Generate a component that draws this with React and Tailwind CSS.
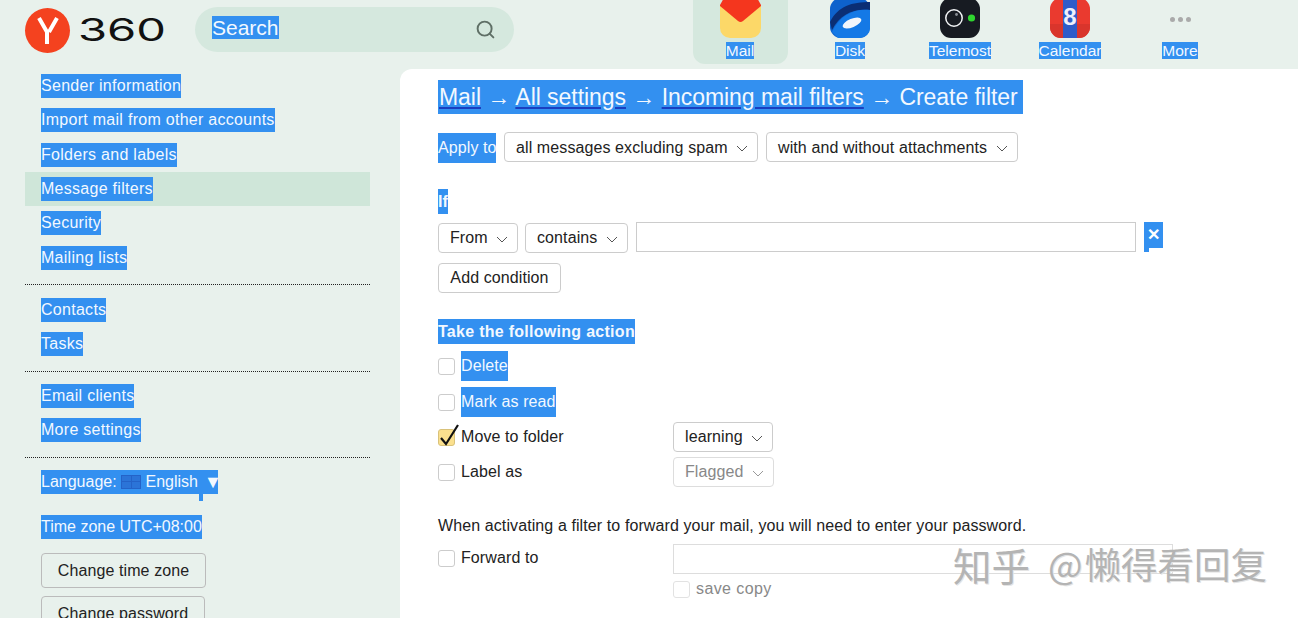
import { Search } from 'lucide-react'

const Sel = ({ children }) => <span className="bg-[#3390f0] text-[#f2f8ff]">{children}</span>

function Chevron({ color = '#555' }) {
  return (
    <svg width="12" height="7" viewBox="0 0 12 7" fill="none" className="ml-[8px] mt-[2px]">
      <path d="M1 1l5 5 5-5" stroke={color} strokeWidth="1" />
    </svg>
  )
}

function Dropdown({ children, className = '', disabled = false }) {
  return (
    <div className={`flex items-center justify-between bg-white border border-[#ccc] rounded-[4px] pl-[11px] pr-[9px] h-[30px] ${disabled ? 'text-[#888] border-[#ddd]' : 'text-[#222]'} ${className}`}>
      <span>{children}</span>
      <Chevron color={disabled ? '#999' : '#555'} />
    </div>
  )
}

function SideRow({ children, active = false }) {
  return (
    <div className={`h-[34.3px] flex items-center pl-4 ${active ? 'bg-[#cfe6d9]' : ''}`}>
      <Sel>{children}</Sel>
    </div>
  )
}

const Divider = ({ className }) => <div className={`h-px border-t border-dotted border-[#222] ${className}`} />

function Check({ checked = false, disabled = false }) {
  return (
    <div className={`relative w-[17px] h-[17px] shrink-0 rounded-[3px] border ${checked ? 'bg-[#fbe08e] border-[#d9c27a]' : 'bg-white border-[#ccc]'} ${disabled ? 'border-[#e2e2e2]' : ''}`}>
      {checked && (
        <svg width="22" height="24" viewBox="0 0 22 24" fill="none" className="absolute left-0 -top-[7px]">
          <path d="M2 15l5 6L19 2" stroke="#111" strokeWidth="2.2" />
        </svg>
      )}
    </div>
  )
}

function MailIcon() {
  return (
    <svg width="41" height="38" viewBox="0 0 41 38">
      <path d="M0 6h41v22a10 10 0 0 1-10 10H10A10 10 0 0 1 0 28z" fill="#fcd868" />
      <path d="M0 5 5 -4h31l5 9v1L23 21a4 4 0 0 1-5 0L0 6z" fill="#f4361e" />
    </svg>
  )
}

function DiskIcon() {
  return (
    <svg width="40" height="38" viewBox="0 0 40 38">
      <rect x="0" y="-2" width="40" height="40" rx="11" fill="#0e62cc" />
      <path d="M0 22C8 6 22 2 40 2v8C24 8 10 14 2 30z" fill="#0b2e74" />
      <path d="M2 32C10 14 26 8 40 10v18a10 10 0 0 1-10 10H8z" fill="#1479e6" />
      <ellipse cx="22" cy="23" rx="10" ry="4.2" transform="rotate(-22 22 23)" fill="#f2f6fb" />
    </svg>
  )
}

function TelemostIcon() {
  return (
    <svg width="40" height="38" viewBox="0 0 40 38">
      <rect x="0" y="-2" width="40" height="40" rx="11" fill="#171b22" />
      <circle cx="14" cy="18" r="8.2" fill="none" stroke="#f0f2f4" strokeWidth="1.5" />
      <circle cx="16.5" cy="14.5" r="1.4" fill="#8a8f96" />
      <circle cx="31.5" cy="18" r="3.6" fill="#2fd62f" />
    </svg>
  )
}

function CalendarIcon() {
  return (
    <svg width="40" height="38" viewBox="0 0 40 38">
      <rect x="0" y="-2" width="40" height="40" rx="11" fill="#ea3a2f" />
      <path d="M0 24h40v3a11 11 0 0 1-11 11H11A11 11 0 0 1 0 27z" fill="#d9352c" />
      <rect x="13" y="-2" width="14" height="40" fill="#2f5cc8" />
    </svg>
  )
}

const apps = [
  { name: 'Mail', icon: <MailIcon />, active: true },
  { name: 'Disk', icon: <DiskIcon /> },
  { name: 'Telemost', icon: <TelemostIcon /> },
  { name: 'Calendar', icon: <CalendarIcon />, badge: '8' },
  { name: 'More' },
]

function AppLink({ app }) {
  return (
    <div className="w-[110px] flex justify-center">
      <div className={`relative w-[95px] h-[64px] flex flex-col items-center rounded-b-[12px] ${app.active ? 'bg-[#d5e8de]' : ''}`}>
        <div className="h-[38px] flex items-center justify-center">
          {app.icon ?? (
            <div className="flex gap-[3px]">
              <div className="w-[5px] h-[5px] rounded-full bg-[#aaa]" />
              <div className="w-[5px] h-[5px] rounded-full bg-[#aaa]" />
              <div className="w-[5px] h-[5px] rounded-full bg-[#aaa]" />
            </div>
          )}
          {app.badge && <span className="absolute top-[3px] text-[24px] leading-[28px] font-bold text-[#eef0fb]">{app.badge}</span>}
        </div>
        <div className="mt-[3px] text-[15.5px] leading-[19px]"><Sel>{app.name}</Sel></div>
      </div>
    </div>
  )
}

export default function App() {
  return (
    <div className="relative w-[1298px] h-[618px] overflow-hidden bg-[#e8f1ec] text-[16px] text-[#222] font-['Liberation_Sans',sans-serif]">
      <header className="h-[69px] flex">
        <div className="w-[45px] h-[45px] mt-[8px] ml-[25px] rounded-full bg-[#f4421f] flex items-center justify-center">
          <svg width="24" height="30" viewBox="0 0 24 30" fill="none">
            <path d="M3 2l8 14v12M21 2l-8 14" stroke="#fff" strokeWidth="4" />
          </svg>
        </div>
        <div className="ml-[8px] mt-[8px] w-[92px] h-[45px] flex items-center font-['Inter',sans-serif] font-normal text-[31px] text-[#111]">
          <span className="inline-block origin-left scale-x-[1.52]">360</span>
        </div>
        <div className="ml-[25px] mt-[7px] w-[319px] h-[45px] rounded-full bg-[#d5e8de] flex items-center justify-between pl-[17px] pr-[18px]">
          <span className="mb-[4px] text-[21px] leading-[24px]"><Sel>Search</Sel></span>
          <Search size={21} strokeWidth={2.2} color="#5f6f66" />
        </div>
        <nav className="ml-[171px] flex">
          {apps.map(app => <AppLink key={app.name} app={app} />)}
        </nav>
      </header>

      <div className="flex h-[549px]">
        <aside className="w-[400px] shrink-0 pl-[25px] pr-[30px] tracking-[0.28px]">
          <SideRow>Sender information</SideRow>
          <SideRow>Import mail from other accounts</SideRow>
          <SideRow>Folders and labels</SideRow>
          <SideRow active>Message filters</SideRow>
          <SideRow>Security</SideRow>
          <SideRow>Mailing lists</SideRow>
          <Divider className="mt-[9px] mb-[8px]" />
          <SideRow>Contacts</SideRow>
          <SideRow>Tasks</SideRow>
          <Divider className="mt-[10px] mb-[6px]" />
          <SideRow>Email clients</SideRow>
          <SideRow>More settings</SideRow>
          <Divider className="mt-[10px] mb-[7px]" />
          <div className="relative h-[34px] flex items-center pl-4 tracking-normal">
            <span className="bg-[#3390f0] text-[#f2f8ff] h-[24px] leading-[24px] flex items-center w-[177px] whitespace-nowrap">
              Language:&nbsp;
              <span className="w-[20px] h-[14px] shrink-0 bg-[#2463c8] grid grid-cols-2 gap-px p-px">
                <span className="bg-[#2b74d8]" /><span className="bg-[#2b74d8]" /><span className="bg-[#2b74d8]" /><span className="bg-[#2b74d8]" />
              </span>
              &nbsp;English
              <span className="ml-[6px] text-[18px] leading-[24px]">▼</span>
            </span>
            <span className="absolute left-[174px] top-[29px] w-[4px] h-[7px] bg-[#3390f0]" />
          </div>
          <div className="mt-[11px] h-[34px] flex items-center pl-4 tracking-normal"><Sel>Time zone UTC+08:00</Sel></div>
          <div className="mt-[9px] ml-4 w-[165px] h-[35px] border border-[#bbb] rounded-[4px] flex items-center justify-center tracking-[0.1px] pt-px">Change time zone</div>
          <div className="mt-[8px] ml-4 w-[164px] h-[35px] border border-[#bbb] rounded-[4px] flex items-center justify-center tracking-[0.1px] pt-px">Change password</div>
        </aside>

        <main className="flex-1 bg-white rounded-tl-[12px] pl-[38px] tracking-[0.1px]">
          <div className="mt-[11px] pl-px text-[23px] leading-[34px] h-[34px] w-[585px] whitespace-nowrap bg-[#3390f0] text-[#f2f8ff] tracking-[-0.05px]">
            <span className="underline decoration-[#1a3fc0]">Mail</span> → <span className="underline decoration-[#1a3fc0]">All settings</span> → <span className="underline decoration-[#1a3fc0]">Incoming mail filters</span> → Create filter
          </div>

          <div className="mt-[18px] flex items-center gap-[8px]">
            <span className="translate-y-px h-[30px] leading-[30px] bg-[#3390f0] text-[#f2f8ff] w-[58px] whitespace-nowrap">Apply to</span>
            <Dropdown className="w-[254px] [&>span]:pt-px">all messages excluding spam</Dropdown>
            <Dropdown className="w-[252px] [&>span]:pt-px">with and without attachments</Dropdown>
          </div>

          <div className="mt-[27px] h-[25px] leading-[25px] w-fit font-bold bg-[#3390f0] text-[#f2f8ff]">If</div>

          <div className="mt-[9px] flex items-start gap-[7px]">
            <Dropdown className="w-[80px]">From</Dropdown>
            <Dropdown className="w-[103px]">contains</Dropdown>
            <div className="ml-px -mt-px w-[500px] h-[30px] border border-[#ccc] bg-white" />
            <div className="relative ml-px -mt-px w-[19px] h-[26px] bg-[#3390f0] text-white font-bold text-center leading-[26px]">
              ✕
              <span className="absolute left-0 top-[26px] w-[5px] h-[4px] bg-[#3390f0]" />
            </div>
          </div>

          <div className="mt-[10px] w-[123px] h-[30px] border border-[#ccc] rounded-[4px] flex items-center justify-center">Add condition</div>

          <div className="mt-[26px] h-[25px] leading-[25px] w-fit font-bold bg-[#3390f0] text-[#f2f8ff] tracking-[0.28px]">Take the following action</div>

          <div className="mt-[7px] h-[30px] flex items-center gap-[6px]">
            <Check />
            <span className="h-[30px] leading-[30px] bg-[#3390f0] text-[#f2f8ff]">Delete</span>
          </div>
          <div className="mt-[6px] h-[30px] flex items-center gap-[6px]">
            <Check />
            <span className="h-[30px] leading-[30px] bg-[#3390f0] text-[#f2f8ff]">Mark as read</span>
          </div>
          <div className="mt-[5px] h-[30px] flex items-center">
            <div className="w-[235px] flex items-center gap-[6px]">
              <Check checked />
              <span>Move to folder</span>
            </div>
            <Dropdown className="w-[100px]">learning</Dropdown>
          </div>
          <div className="mt-[5px] h-[30px] flex items-center">
            <div className="w-[235px] flex items-center gap-[6px]">
              <Check />
              <span>Label as</span>
            </div>
            <Dropdown className="w-[101px]" disabled>Flagged</Dropdown>
          </div>

          <div className="mt-[29px] leading-[20px] whitespace-nowrap">When activating a filter to forward your mail, you will need to enter your password.</div>

          <div className="mt-[8px] h-[30px] flex items-center">
            <div className="w-[235px] flex items-center gap-[6px] -translate-y-px">
              <Check />
              <span>Forward to</span>
            </div>
            <div className="w-[500px] h-[30px] border border-[#ddd] bg-white" />
          </div>
          <div className="mt-[3px] ml-[235px] flex items-center gap-[6px] text-[#888]">
            <Check disabled />
            <span className="tracking-[0.4px]">save copy</span>
          </div>
          <div className="mt-[20px] ml-[235px] w-[500px] h-[30px] border border-[#ddd]" />
        </main>
      </div>

      <div className="absolute left-[953px] top-[541px] flex items-center h-[46px] whitespace-nowrap text-[36.5px] leading-[46px] text-[#b4b4b4] [text-shadow:1px_1px_0_#e4e4e4] font-['Noto_Sans_CJK_SC',sans-serif]">
        <span className="text-[38.5px]">知乎</span>
        <span className="ml-[18px]">@</span>
        <span className="ml-[2px]">懒得看回复</span>
      </div>
    </div>
  )
}
